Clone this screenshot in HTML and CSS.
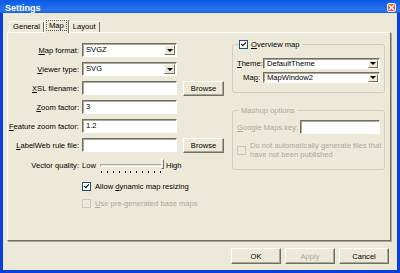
FILE: index.html
```html
<!DOCTYPE html>
<html lang="en">
<head>
  <meta charset="UTF-8" />
  <title>Settings</title>
  <link rel="stylesheet" href="styles.css">
</head>
<body>
<div class="window">
  <div class="titlebar">
    <span class="title">Settings</span>
    <span class="close">
      <svg width="9" height="9" viewBox="0 0 9 9">
        <path d="M2.5 2.5 L6.5 6.5 M6.5 2.5 L2.5 6.5" stroke="#fff" stroke-width="1.4" stroke-linecap="square"/>
      </svg>
    </span>
  </div>

  <div class="frame">
    <div class="tabs">
      <div class="tab">General</div>
      <div class="tab active"><span class="focus">Map</span></div>
      <div class="tab">Layout</div>
    </div>

    <div class="panel">
      <div class="form">
        <label class="lbl"><u>M</u>ap format:</label>
        <div class="select"><span>SVGZ</span><i class="drop"></i></div>
        <span></span>

        <label class="lbl"><u>V</u>iewer type:</label>
        <div class="select"><span>SVG</span><i class="drop"></i></div>
        <span></span>

        <label class="lbl"><u>X</u>SL filename:</label>
        <div class="input"></div>
        <button class="btn">Browse</button>

        <label class="lbl"><u>Z</u>oom factor:</label>
        <div class="input">3</div>
        <span></span>

        <label class="lbl"><u>F</u>eature zoom factor:</label>
        <div class="input">1.2</div>
        <span></span>

        <label class="lbl"><u>L</u>abelWeb rule file:</label>
        <div class="input"></div>
        <button class="btn">Browse</button>

        <label class="lbl">Vector quality:</label>
        <div class="slider">
          <span>Low</span>
          <div class="track">
            <div class="groove"></div>
            <div class="thumb"></div>
            <div class="ticks">
              <i></i><i></i><i></i><i></i><i></i><i></i><i></i><i></i><i></i><i></i><i></i>
            </div>
          </div>
          <span>High</span>
        </div>

        <div class="check wide"><i class="box on"></i><span>Allow <u>d</u>ynamic map resizing</span></div>
        <div class="check wide disabled"><i class="box"></i><span><u>U</u>se pre-generated base maps</span></div>
      </div>

      <div class="side">
        <div class="group overview">
          <div class="legend"><i class="box on"></i><span><u>O</u>verview map</span></div>
          <div class="pair">
            <label class="lbl short"><u>T</u>heme:</label>
            <div class="select small"><span>DefaultTheme</span><i class="drop"></i></div>
          </div>
          <div class="pair">
            <label class="lbl short">Ma<u>p</u>:</label>
            <div class="select small"><span>MapWindow2</span><i class="drop"></i></div>
          </div>
        </div>

        <div class="group mashup disabled">
          <div class="legend"><span>Mashup options</span></div>
          <div class="pair">
            <label class="lbl"><u>G</u>oogle Maps key:</label>
            <div class="input key"></div>
          </div>
          <div class="check multi"><i class="box"></i><span>Do not automatically generate tiles that<br>have not been published</span></div>
        </div>
      </div>
    </div>

    <div class="buttons">
      <button class="btn big">OK</button>
      <button class="btn big disabled">Apply</button>
      <button class="btn big">Cancel</button>
    </div>
  </div>
</div>
</body>
</html>
```

FILE: styles.css
```css
* {
  box-sizing: border-box;
}

body {
  margin: 0;
  font-family: "Liberation Sans", Arial, sans-serif;
  font-size: 7.6px;
  color: #000;
}

.window {
  width: 400px;
  height: 273px;
  display: flex;
  flex-direction: column;
}

.titlebar {
  height: 13px;
  background: linear-gradient(#0a5ae6, #2a74ee 80%, #1d5fd8);
  color: #fff;
  display: flex;
  align-items: flex-end;
  justify-content: space-between;
  padding: 0 4px 0 5px;
}

.title {
  font-weight: bold;
  font-size: 9px;
  line-height: 10px;
}

.close {
  width: 9px;
  height: 9px;
  margin-bottom: 1px;
  background: #e2553a;
  border: 1px solid #fff;
  border-radius: 2px;
  display: flex;
}

.close svg {
  margin: -1px;
}

.frame {
  flex: 1;
  background: #ece9d8;
  border: 3px solid #0a3fdc;
  border-top: 0;
  padding: 6px 3px 0 4px;
  display: flex;
  flex-direction: column;
}

/* tabs */

.tabs {
  display: flex;
  padding-left: 2px;
  height: 13px;
  align-items: flex-end;
  position: relative;
  z-index: 1;
}

.tab {
  height: 11px;
  padding: 0 3px;
  border: 1px solid;
  border-color: #fff #716f64 transparent #fff;
  border-bottom: 0;
  border-radius: 2px 2px 0 0;
  background: #ece9d8;
  line-height: 10px;
}

.tab.active {
  height: 14px;
  margin-bottom: -1px;
  padding: 1px 1px 0;
}

.focus {
  border: 1px dotted #555;
  padding: 0 2px;
}

.panel {
  height: 209px;
  width: 384px;
  background: #ece9d8;
  border: 1px solid;
  border-color: #fff #716f64 #716f64 #fff;
  box-shadow: 1px 1px 0 #aca899;
  display: flex;
}

/* left form */

.form {
  width: 224px;
  padding-top: 10px;
  display: grid;
  grid-template-columns: 71px 95px 44px;
  grid-template-rows: repeat(6, 14px) 17px 14px 10px;
  column-gap: 3px;
  row-gap: 5px;
  align-items: center;
  align-content: start;
}

.form .btn {
  margin-left: 3px;
}

.lbl {
  text-align: right;
  white-space: nowrap;
}

.select,
.input {
  height: 14px;
  background: #fff;
  border: 1px solid;
  border-color: #716f64 #fff #fff #716f64;
  box-shadow: inset 1px 1px 0 #aca899;
  display: flex;
  align-items: center;
  padding-left: 3px;
  line-height: 10px;
}

.select span {
  flex: 1;
}

.drop {
  width: 11px;
  height: 10px;
  margin-right: 1px;
  background: #ece9d8;
  border: 1px solid;
  border-color: #fff #716f64 #716f64 #fff;
  display: flex;
  align-items: center;
  justify-content: center;
}

.drop::after {
  content: "";
  border-left: 3px solid transparent;
  border-right: 3px solid transparent;
  border-top: 3px solid #000;
}

.btn {
  height: 15px;
  padding: 0;
  font: inherit;
  background: #ece9d8;
  border: 1px solid;
  border-color: #fff #716f64 #716f64 #fff;
  box-shadow: inset -1px -1px 0 #aca899;
  color: #000;
}

.slider {
  grid-column: 2 / 4;
  display: flex;
  align-items: center;
  gap: 4px;
}

.track {
  width: 62px;
  height: 17px;
  display: flex;
  flex-direction: column;
  justify-content: center;
  position: relative;
}

.groove {
  height: 3px;
  border: 1px solid;
  border-color: #aca899 #fff #fff #aca899;
}

.thumb {
  position: absolute;
  right: -2px;
  top: 2px;
  width: 3px;
  height: 10px;
  background: #ece9d8;
  border: 1px solid;
  border-color: #fff #716f64 #716f64 #fff;
}

.ticks {
  position: absolute;
  left: 1px;
  right: 1px;
  bottom: 1px;
  display: flex;
  justify-content: space-between;
}

.ticks i {
  width: 1px;
  height: 2px;
  background: #000;
}

.check {
  display: flex;
  align-items: center;
  gap: 4px;
  white-space: nowrap;
}

.wide {
  grid-column: 2 / 4;
}

.box {
  width: 9px;
  height: 9px;
  background: #fff;
  border: 1px solid #1c5180;
  display: flex;
  align-items: center;
  justify-content: center;
  flex-shrink: 0;
}

.box.on::after {
  content: "";
  width: 4px;
  height: 2px;
  border-left: 1.5px solid #000;
  border-bottom: 1.5px solid #000;
  transform: translate(0, -1px) rotate(-45deg);
}

.disabled {
  color: #aca899;
}

.disabled .box {
  border-color: #c9c7ba;
  background: #ece9d8;
}

/* right side group boxes */

.side {
  width: 153px;
  padding-top: 11px;
  display: flex;
  flex-direction: column;
  gap: 17px;
}

.group {
  border: 1px solid #d0d0bf;
  border-radius: 3px;
  padding: 0 4px;
  display: flex;
  flex-direction: column;
}

.group.overview {
  height: 49px;
}

.group.mashup {
  height: 60px;
}

.legend {
  align-self: flex-start;
  height: 10px;
  margin: -6px 0 0 2px;
  padding: 0 2px 0 2px;
  background: #ece9d8;
  display: flex;
  align-items: center;
  gap: 3px;
}

.overview .legend {
  margin-left: 2px;
  padding-left: 0;
}

.pair {
  display: flex;
  align-items: center;
  gap: 3px;
}

.overview .pair {
  margin-top: 3px;
}

.overview .legend + .pair {
  margin-top: 9px;
}

.short {
  width: 23px;
}

.select.small {
  width: 117px;
  height: 11px;
}

.select.small .drop {
  height: 8px;
  width: 10px;
}

.mashup .pair {
  margin-top: 5px;
  gap: 2px;
}

.input.key {
  flex: 1;
}

.check.multi {
  margin-top: 7px;
  white-space: nowrap;
  line-height: 9px;
}

.buttons {
  display: flex;
  justify-content: flex-end;
  gap: 4px;
  padding: 7px 5px 0 0;
}

.btn.big {
  width: 50px;
  height: 16px;
}
```
